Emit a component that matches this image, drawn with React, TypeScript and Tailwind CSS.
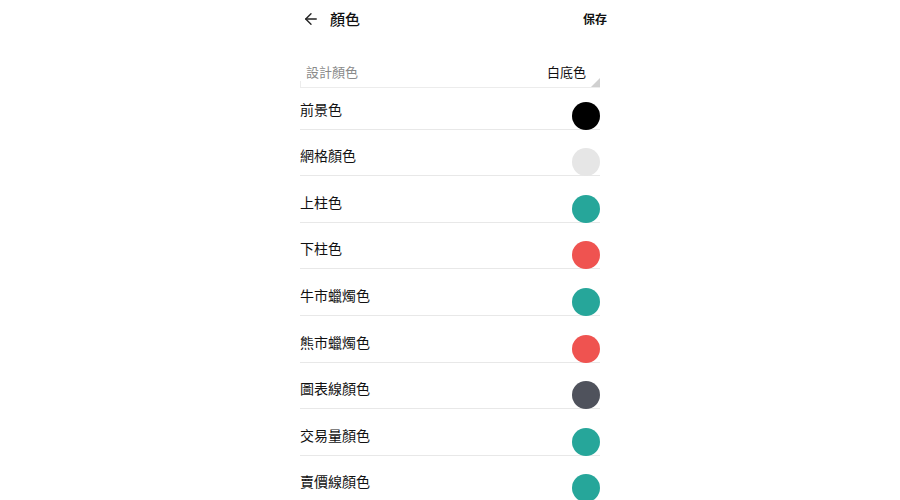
import { ArrowLeft } from "lucide-react";

const rows = [
  { label: "前景色", color: "bg-[#000000]" },
  { label: "網格顏色", color: "bg-[#e6e6e6]" },
  { label: "上柱色", color: "bg-[#26a69a]" },
  { label: "下柱色", color: "bg-[#ef5350]" },
  { label: "牛市蠟燭色", color: "bg-[#26a69a]" },
  { label: "熊市蠟燭色", color: "bg-[#ef5350]" },
  { label: "圖表線顏色", color: "bg-[#4f525c]" },
  { label: "交易量顏色", color: "bg-[#26a69a]" },
  { label: "賣價線顏色", color: "bg-[#26a69a]" },
];

const App = () => {
  return (
    <div
      className="h-[500px] w-[900px] overflow-hidden bg-white text-[#111]"
      style={{ fontFamily: '"Noto Sans CJK TC", "Noto Sans", sans-serif' }}
    >
      <div className="mx-auto w-[300px]">
        {/* Header */}
        <div className="flex h-[37px] items-center justify-between">
          <div className="flex items-center">
            <ArrowLeft className="ml-[2px] h-[18px] w-[18px] text-[#222]" strokeWidth={1.8} />
            <span className="ml-[10px] text-[15px] font-medium leading-none">顏色</span>
          </div>
          <span className="mr-[-7px] text-[12px] font-bold leading-none">保存</span>
        </div>

        {/* Select */}
        <div className="relative mt-[22px] flex h-[29px] items-start justify-between border-b border-[#ececec] pl-[6px] pr-[14px] pt-[6px]">
          <span className="text-[13px] leading-none text-[#8a8a8a]">設計顏色</span>
          <span className="text-[13px] leading-none text-[#111]">白底色</span>
          <div className="absolute bottom-0 left-0 h-[6px] w-px bg-[#ececec]" />
          <div className="absolute bottom-0 right-0 h-0 w-0 border-b-[9px] border-l-[9px] border-b-[#d0d0d0] border-l-transparent" />
        </div>

        {/* Rows */}
        <div className="-mt-[5px]">
          {rows.map((row) => (
            <div
              key={row.label}
              className="flex h-[46.6px] items-end justify-between border-b border-[#e8e8e8]"
            >
              <span className="mb-[10px] text-[14px] leading-[20px]">{row.label}</span>
              <div className={`mb-[-1px] h-[28px] w-[28px] rounded-full ${row.color}`} />
            </div>
          ))}
        </div>
      </div>
    </div>
  );
};

export default App;
